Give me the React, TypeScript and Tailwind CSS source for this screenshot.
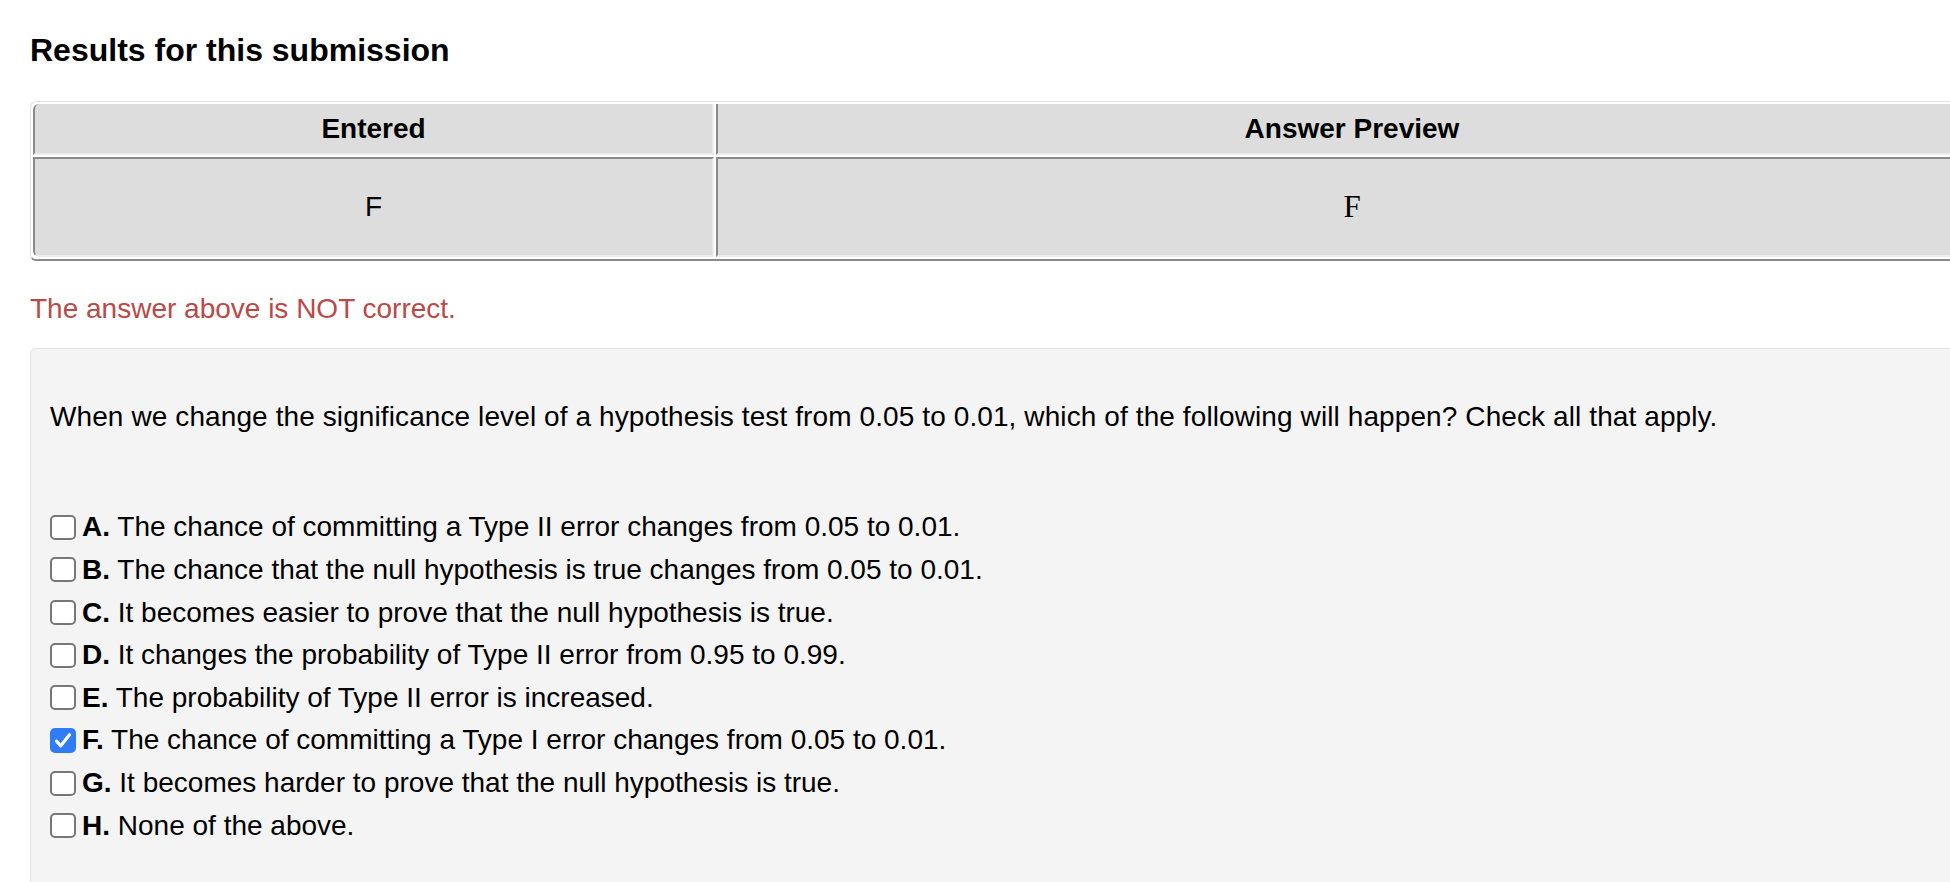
import React from "react";

const options: { letter: string; text: string; checked?: boolean }[] = [
  { letter: "A.", text: "The chance of committing a Type II error changes from 0.05 to 0.01." },
  { letter: "B.", text: "The chance that the null hypothesis is true changes from 0.05 to 0.01." },
  { letter: "C.", text: "It becomes easier to prove that the null hypothesis is true." },
  { letter: "D.", text: "It changes the probability of Type II error from 0.95 to 0.99." },
  { letter: "E.", text: "The probability of Type II error is increased." },
  { letter: "F.", text: "The chance of committing a Type I error changes from 0.05 to 0.01.", checked: true },
  { letter: "G.", text: "It becomes harder to prove that the null hypothesis is true." },
  { letter: "H.", text: "None of the above." },
];

function Checkbox({ checked }: { checked?: boolean }) {
  if (checked) {
    return (
      <span className="flex h-[25px] w-[26px] shrink-0 items-center justify-center rounded-[5px] bg-[#2f7cf6]">
        <svg viewBox="0 0 26 25" className="h-[25px] w-[26px]">
          <path d="M6.5 13.2 L10.8 17.8 L19.5 6.8" fill="none" stroke="white" strokeWidth="3.2" strokeLinecap="round" strokeLinejoin="round" />
        </svg>
      </span>
    );
  }
  return <span className="h-[25px] w-[26px] shrink-0 rounded-[5px] border-2 border-[#777777] bg-white" />;
}

export default function App() {
  return (
    <div className="h-[882px] w-[1950px] overflow-hidden bg-white pl-[30px] text-black" style={{ fontFamily: '"Liberation Sans", Arial, sans-serif' }}>
      <h2 className="pt-[32px] text-[32px] font-bold leading-[36px]">Results for this submission</h2>

      <table className="mt-[33px] w-[1962px] table-fixed border-separate border-spacing-[2px] rounded-md border-t border-l border-b-2 border-r-2 border-t-[#e2e2e2] border-l-[#e2e2e2] border-b-[#8a8a8a] border-r-[#8a8a8a]">
        <colgroup>
          <col className="w-[681px]" />
          <col />
        </colgroup>
        <thead>
          <tr>
            <th className="h-[51px] rounded-tl-md border-l-2 border-r-2 border-b-2 border-l-[#8a8a8a] border-r-[#ececec] border-b-[#ececec] bg-[#dddddd] text-center text-[28px] font-bold leading-[32px]">
              Entered
            </th>
            <th className="h-[51px] border-l-2 border-r-2 border-b-2 border-l-[#8a8a8a] border-r-[#ececec] border-b-[#ececec] bg-[#dddddd] text-center text-[28px] font-bold leading-[32px]">
              Answer Preview
            </th>
          </tr>
        </thead>
        <tbody>
          <tr>
            <td className="h-[100px] rounded-bl-md border-2 border-t-[#8a8a8a] border-l-[#8a8a8a] border-r-[#ececec] border-b-[#ececec] bg-[#dddddd] text-center text-[28px] leading-[32px]">
              F
            </td>
            <td className="h-[100px] border-2 border-t-[#8a8a8a] border-l-[#8a8a8a] border-r-[#ececec] border-b-[#ececec] bg-[#dddddd] text-center text-[31px] leading-[32px]" style={{ fontFamily: '"Liberation Serif", "Times New Roman", serif' }}>
              F
            </td>
          </tr>
        </tbody>
      </table>

      <p className="mt-[32px] text-[28px] leading-[32px] text-[#b94a48]">The answer above is NOT correct.</p>

      <div className="mt-[23px] h-[700px] w-[2000px] rounded-tl-md border border-[#e3e3e3] bg-[#f4f4f4] pl-[19px] pt-[52px]">
        <p className="text-[28px] leading-[32px] tracking-[0.1px]">
          When we change the significance level of a hypothesis test from 0.05 to 0.01, which of the following will happen? Check all that apply.
        </p>
        <div className="mt-[73px] flex flex-col">
          {options.map((o) => (
            <label key={o.letter} className="flex h-[42.64px] items-center gap-[6px] text-[28px] leading-[32px]">
              <Checkbox checked={o.checked} />
              <span>
                <b className="font-bold">{o.letter}</b> {o.text}
              </span>
            </label>
          ))}
        </div>
      </div>
    </div>
  );
}
